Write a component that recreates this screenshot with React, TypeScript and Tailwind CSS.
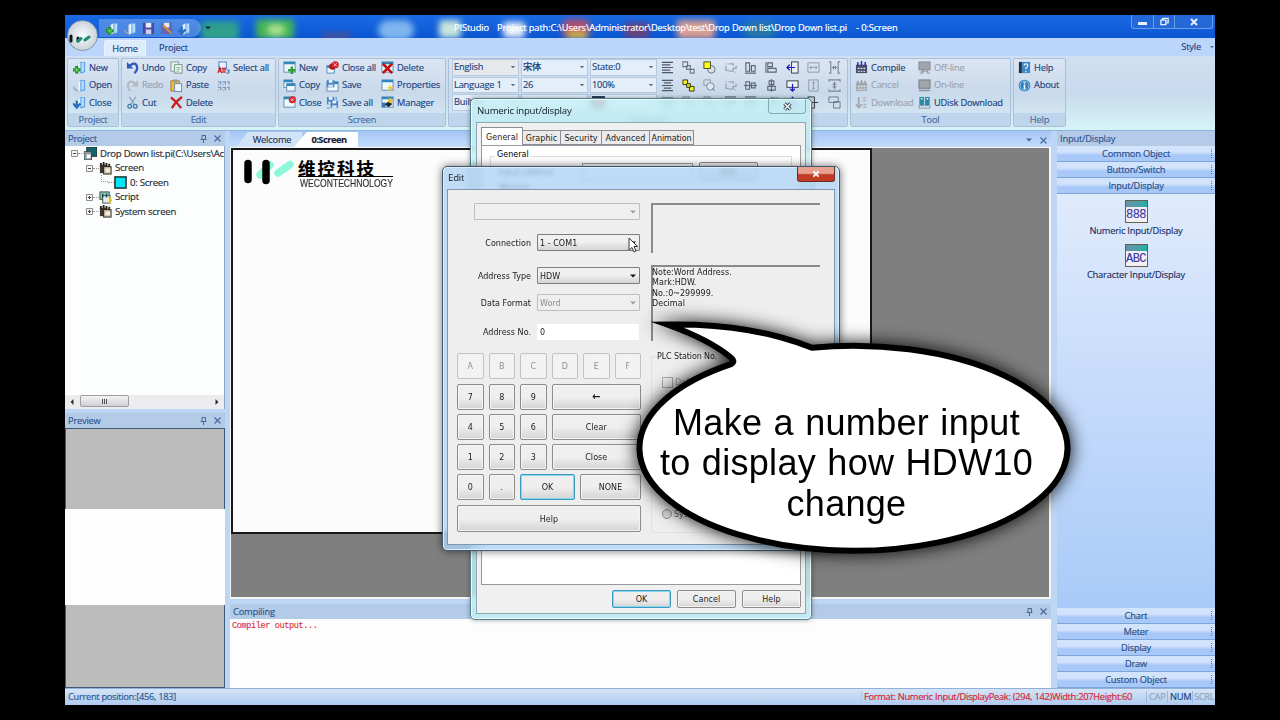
import type { ReactNode } from "react";
import clsx from "clsx";

const Svg = ({ children, size = 13 }: { children: ReactNode; size?: number }) => (
  <svg width={size} height={size} viewBox="0 0 14 14" fill="none" className="shrink-0">
    {children}
  </svg>
);

const Folder = () => (
  <>
    <path d="M5 3 L9 1 V12 L5 13.5 Z" fill="#e8f4fc" stroke="#9fb8d0" strokeWidth=".5" />
    <path d="M8 1 H13 V12 L8 13.5 Z" fill="#4f9be0" />
    <path d="M9 2 L12 1.5 V11 L9 12 Z" fill="#b4dcfa" />
  </>
);

const Win = ({ x = 1, y = 1, w = 12, h = 11 }: { x?: number; y?: number; w?: number; h?: number }) => (
  <>
    <rect x={x} y={y} width={w} height={h} fill="#eef7fc" stroke="#5a8cb4" />
    <rect x={x} y={y} width={w} height={2.5} fill="#2f86b8" />
  </>
);

const RedDot = () => (
  <>
    <circle cx="10" cy="4" r="3.8" fill="#d8242c" />
    <path d="M8.5 2.5 l3 3 m0 -3 l-3 3" stroke="#fbd0d0" />
  </>
);

const Disk = ({ x = 5, y = 1 }: { x?: number; y?: number }) => (
  <>
    <rect x={x} y={y} width="8" height="8" fill="#4a86c8" />
    <rect x={x + 2} y={y} width="4" height="3" fill="#e8f2fa" />
    <rect x={x + 1.5} y={y + 5} width="5" height="3" fill="#cfe2f4" />
  </>
);

const icons: Record<string, ReactNode> = {
  newProject: (
    <>
      <Folder />
      <path d="M4 5.5 V13.5 M0 9.5 H8" stroke="#1f8a2c" strokeWidth="3.4" />
      <path d="M4 7 V12 M1.5 9.5 H6.5" stroke="#6fd060" strokeWidth="1.2" />
    </>
  ),
  open: (
    <>
      <Folder />
      <path d="M1 8 q0 4 4 4" stroke="#9aa4b0" strokeWidth="1.5" />
    </>
  ),
  close: (
    <>
      <Folder />
      <path d="M0 8 L4 12.5 L8 8 M4 5 V11" stroke="#2a6cc0" strokeWidth="2.4" />
    </>
  ),
  undo: (
    <>
      <path d="M4 5 Q10 0 12 6 Q12.5 10 9 13" stroke="#3058b8" strokeWidth="2.4" />
      <path d="M1 1 V8 H8 Z" fill="#3058b8" />
    </>
  ),
  redo: (
    <>
      <path d="M10 5 Q4 0 2 6 Q1.5 10 5 13" stroke="#b4bac2" strokeWidth="2.2" />
      <path d="M13 1 V8 H6 Z" fill="#b4bac2" />
    </>
  ),
  cut: (
    <>
      <path d="M3.5 1 L9 9 M10.5 1 L5 9" stroke="#8ca4b8" strokeWidth="1.4" />
      <circle cx="4" cy="11" r="2" stroke="#3c78b0" strokeWidth="1.4" />
      <circle cx="10" cy="11" r="2" stroke="#3c78b0" strokeWidth="1.4" />
    </>
  ),
  copy: (
    <>
      <rect x="1" y="1" width="8" height="10" fill="#e6f2ea" stroke="#7c9c98" />
      <rect x="5" y="4" width="8" height="9" fill="#f4faf4" stroke="#6c9080" />
      <path d="M7 7 h4 M7 9 h4 M7 11 h3" stroke="#78b088" />
    </>
  ),
  paste: (
    <>
      <rect x="1" y="2" width="9" height="11" fill="#f0bc38" stroke="#a87c20" />
      <rect x="3.5" y=".5" width="4" height="3" fill="#8898a8" />
      <rect x="5" y="5" width="7.5" height="8.5" fill="#eef4fc" stroke="#6888b0" />
    </>
  ),
  cross: (
    <path d="M1 1.5 Q7 6 12 13 M13 1 Q6 6 2 13" stroke="#c81e1e" strokeWidth="2.5" />
  ),
  selectAll: (
    <>
      <rect x="2" y="1" width="8" height="7" fill="#f0f4fc" stroke="#4878b8" />
      <path d="M1 13 L3 7 L5 13 M2 11 h2 M6.5 7 V13 M8.5 7 V13" stroke="#d02020" strokeWidth="1.3" />
      <path d="M10 8 L13 12 M13 9 v4 h-3" stroke="#3868b0" />
    </>
  ),
  grid: (
    <path
      d="M1 3 h3 v3 M6 3 h3 v3 M11 3 h2 v3 M1 9 h3 v3 M6 9 h3 v3 M11 9 h2 v3 M1 6 h1 M6 6 h1 M1 12 h1 M6 12 h1"
      stroke="#7e98b8"
      strokeWidth="1.4"
    />
  ),
  newScreen: (
    <>
      <Win />
      <path d="M9.5 6 V14 M5.5 10 H13.5" stroke="#2c9c34" strokeWidth="2.6" />
    </>
  ),
  copyScreen: (
    <>
      <Win x={1} y={1} w={9} h={8} />
      <Win x={4} y={5} w={9} h={8} />
    </>
  ),
  closeScreen: (
    <>
      <Win />
      <RedDot />
    </>
  ),
  closeAll: (
    <>
      <Win x={1} y={5} w={8} h={8} />
      <circle cx="7" cy="6" r="3.5" fill="#b01820" />
      <RedDot />
    </>
  ),
  save: (
    <>
      <Win x={1} y={3} w={12} h={10} />
      <Disk x={1} y={1} />
    </>
  ),
  saveAll: (
    <>
      <Disk x={1} y={1} />
      <Disk x={5} y={5} />
      <path d="M1 13 h3 M11 1 v3" stroke="#4a86c8" />
    </>
  ),
  deleteScreen: (
    <>
      <Win />
      <path d="M2 3 L12 13 M12 3 L2 13" stroke="#c01414" strokeWidth="2.8" />
    </>
  ),
  properties: (
    <>
      <Win />
      <path d="M10 6 l1 2.5 h2.5 l-2 2 l1 3 l-2.5 -2 l-2.5 2 l1 -3 l-2 -2 h2.5 z" fill="#f0c838" />
    </>
  ),
  manager: (
    <>
      <Win />
      <rect x="1" y="7" width="4" height="5" fill="#3878c0" />
      <path d="M4 9 L9 5 L12 9 L8 12 Z" fill="#202830" />
      <circle cx="10" cy="5" r="2.5" fill="#e8c030" />
    </>
  ),
  compile: (
    <>
      <rect x="1" y="4" width="12" height="9" fill="#4a4f68" />
      <path d="M3 1 v5 M7 0 v6 M11 1 v5" stroke="#2b32c0" strokeWidth="1.6" />
      <path d="M3 8 h2 M6 8 h2 M9 8 h2 M3 11 h2 M6 11 h2 M9 11 h2" stroke="#dfe6f8" strokeWidth="1.2" />
    </>
  ),
  cancel: (
    <>
      <rect x="1" y="4" width="12" height="9" fill="#a8adb4" />
      <path d="M3 2 v4 M7 1 v5 M11 2 v4" stroke="#989da4" strokeWidth="1.6" />
      <path d="M3 8 h2 M6 8 h2 M9 8 h2 M3 11 h2 M6 11 h2 M9 11 h2" stroke="#e4e8ec" strokeWidth="1.2" />
    </>
  ),
  download: (
    <>
      <path d="M4 1 V12 M1 9 L4 12.5 L7 9" stroke="#a4a9b0" strokeWidth="2" />
      <path d="M8 2 h5 M8 5 h5 M8 9 h5 M8 12 h5 M10 1 v5 M10 8 v5" stroke="#b0b5bc" />
    </>
  ),
  offline: (
    <>
      <rect x="1" y="1" width="12" height="8.5" fill="#a2a6ac" stroke="#85898f" />
      <path d="M3 11 h8 M5 9 v4 M2 13 h4 M10 10 v3 h3" stroke="#8b8f95" />
    </>
  ),
  online: (
    <>
      <rect x="1" y="1" width="12" height="9" fill="#a2a6ac" stroke="#777b81" />
      <path d="M1 12.5 H13" stroke="#8b8f95" strokeWidth="1.6" />
    </>
  ),
  udisk: (
    <>
      <rect x="1.5" y="1" width="5" height="9" fill="#2c88a8" />
      <rect x="7.5" y="1" width="5" height="9" fill="#2c88a8" />
      <path d="M3 3 h2 M9 3 h2" stroke="#d8f0f4" strokeWidth="1.5" />
      <path d="M1 10.5 H13 V13 H1 Z" fill="#e6edf4" stroke="#57718c" strokeWidth=".7" />
    </>
  ),
  help: (
    <>
      <rect x="1" y="1" width="12" height="12" fill="#3e86c8" />
      <rect x="1" y="1" width="3" height="12" fill="#26323e" />
      <path d="M6.5 5 q0 -2 2 -2 q2.2 0 2 2 q0 1.5 -2 2.5 v1.5 M8.5 10.5 v1.5" stroke="#e4f2fc" strokeWidth="1.3" />
    </>
  ),
  about: (
    <>
      <circle cx="7" cy="7" r="6.3" fill="#2f7fc0" />
      <circle cx="7" cy="7" r="4.8" stroke="#9fd0f0" />
      <path d="M7 6 V11 M7 3.3 v1.5" stroke="#fff" strokeWidth="1.8" />
    </>
  ),
  quickSave: (
    <>
      <rect x="1" y="1" width="12" height="12" fill="#4a4aa0" />
      <rect x="4" y="1" width="6" height="5" fill="#e8ecfa" />
      <rect x="4" y="8" width="6" height="5" fill="#c8d0ee" />
    </>
  ),
  quickSaveAs: (
    <>
      <rect x="1" y="1" width="12" height="12" fill="#6666b0" />
      <rect x="4" y="1" width="6" height="5" fill="#e8ecfa" />
      <path d="M4 4 L12 12" stroke="#d89030" strokeWidth="2.2" />
    </>
  ),
};

const alignIcons: ReactNode[] = [
  <path d="M1 1.5 H13 M1 4.200 H10 M1 7 H13 M1 9.800 H10 M1 12.500 H13" stroke="#4c5868" strokeWidth="1.2" />,
  <path d="M1 1 h5 v5 h-5 z M5 5 h4 v4 h-4 z M9 9 h4 v4 h-4 z" fill="#dfe6ee" stroke="#6a7684" strokeWidth="1.2" />,
  <>
    <circle cx="9" cy="9" r="4" stroke="#687078" fill="#dce0e4" />
    <rect x="1" y="1" width="7" height="7" fill="#ffff20" stroke="#404818" />
  </>,
  <path d="M5 3 h5 v2 M2 5 v5 h3 M9 8 h4 v-3 M5 11 h5 v-3 M2 3 h1 M12 12 h1" stroke="#9ca6b2" strokeWidth="1.4" />,
  <path d="M1 13 H13 M2 2 h4 v9 h-4 z M8 5 h4 v6 h-4 z" stroke="#5a6676" strokeWidth="1.2" />,
  <path d="M1 1 V13 M3 2 h5 v4 h-5 z M3 8 h9 v4 h-9 z" stroke="#5a6676" strokeWidth="1.2" />,
  <>
    <rect x="6" y="1" width="7" height="12" stroke="#303840" fill="#eef2f8" />
    <path d="M10 7 H1 M4 4 L1 7 L4 10" stroke="#1818c8" strokeWidth="1.3" />
  </>,
  <path d="M1 2 H13 V12 H1 Z M3 7 H11 M5 5 L3 7 L5 9 M9 5 L11 7 L9 9" stroke="#8c96a4" />,
  <path d="M1 1 h2 v12 h-2 M13 1 h-2 v12 h2 M4 7 H10 M6 5 v4 M8 5 v4" stroke="#7a8694" strokeWidth="1.2" />,
  <path d="M1 1.5 H13 M3 4.200 H11 M1 7 H13 M3 9.800 H11 M1 12.500 H13" stroke="#4c5868" strokeWidth="1.2" />,
  <>
    <path d="M1 1 h5 v5 h-5 z M8 8 h5 v5 h-5 z" fill="#f8f020" stroke="#303408" />
    <path d="M5 5 h4 v4 h-4 z" fill="#e0d818" stroke="#303408" />
  </>,
  <>
    <rect x="1" y="1" width="7" height="6" stroke="#909aa6" />
    <circle cx="8" cy="8" r="4" stroke="#7a8694" fill="#dfe6ee" />
    <path d="M10 10 L13 13" stroke="#7a8694" />
  </>,
  <path d="M5 3 h5 v2 M2 5 v5 h3 M9 8 h4 v-3 M5 11 h5 v-3 M2 3 h1 M12 12 h1" stroke="#9ca6b2" strokeWidth="1.4" />,
  <path d="M0 7 H14 M2 3 h4 v8 h-4 z M8 4.5 h4 v5 h-4 z" stroke="#5a6676" strokeWidth="1.2" />,
  <path d="M7 0 V14 M4.5 2 h5 v4 h-5 z M3 8 h8 v4 h-8 z" stroke="#5a6676" strokeWidth="1.2" />,
  <>
    <rect x="1" y="2" width="12" height="7" stroke="#303840" fill="#eef2f8" />
    <path d="M7 5 V13 M4.5 10.5 L7 13 L9.5 10.5" stroke="#1818c8" strokeWidth="1.3" />
  </>,
  <path d="M2 1 H12 V13 H2 Z M7 3 V11 M5.5 4.5 L7 3 L8.5 4.5 M5.5 9.5 L7 11 L8.5 9.5" stroke="#8c96a4" />,
  <path d="M1 3 v-2 h12 v2 M1 11 v2 h12 v-2 M7 3 v8 M5 5.5 h4 M5 8.5 h4" stroke="#7a8694" strokeWidth="1.2" />,
  <path d="M1 2 H13 M4 4.5 H13 M1 7 H13 M4 9.5 H13 M1 12 H13" stroke="#5c6878" />,
  <path d="M1 1 h7 v7 h-7 z M6 6 h7 v7 h-7 z" stroke="#7c8694" />,
  <path d="M1 1 h7 v7 h-7 z M6 6 h7 v7 h-7 z" stroke="#7c8694" />,
  <path d="M1 1 H13 M2 3 h4 v9 h-4 z M8 3 h4 v6 h-4 z" stroke="#4c5868" />,
  <path d="M1 1 H13 M2 3 h4 v9 h-4 z M8 3 h4 v6 h-4 z" stroke="#4c5868" />,
  <path d="M13 1 V13 M6 2 h5 v4 h-5 z M2 8 h9 v4 h-9 z" stroke="#6c7888" />,
  <path d="M7 1 V9 M4 4 L7 1 L10 4 M1 7 h12 v6 h-12 z" stroke="#1818c8" />,
  <path d="M1 1 H8 V13 H1 Z M12 7 H5" stroke="#303840" />,
  <path d="M1 1 h10 v6 h-10 z M6 6 h7 v7 h-7 z" stroke="#6c7888" />,
];

const Caret = ({ className }: { className?: string }) => (
  <svg width="6" height="4" viewBox="0 0 6 4" className={clsx("shrink-0", className)}>
    <path d="M0 .5 H6 L3 3.5 Z" fill="currentColor" />
  </svg>
);

const PinClose = () => (
  <div className="flex items-center gap-[7px] text-[#44699c]">
    <svg width="7" height="8" viewBox="0 0 7 8" fill="none" stroke="currentColor">
      <path d="M2 .5 H5.5 V4.5 H2 Z M.5 4.5 H6.5 M3.5 5 V8" />
    </svg>
    <svg width="7" height="7" viewBox="0 0 7 7" stroke="currentColor" strokeWidth="1.1">
      <path d="M.5 .5 L6.5 6.5 M6.5 .5 L.5 6.5" />
    </svg>
  </div>
);

const PanelHeader = ({ title, buttons = true }: { title: string; buttons?: boolean }) => (
  <div className="flex h-[15px] shrink-0 items-center justify-between bg-[#b3cbe6] pl-[3px] pr-1 text-[#2b5591]">
    <span>{title}</span>
    {buttons && <PinClose />}
  </div>
);

type Item = { icon: string; label?: string; disabled?: boolean };

const RibbonColumn = ({ items, className }: { items: Item[]; className: string }) => (
  <div className={clsx("flex shrink-0 flex-col", className)}>
    {items.map((item, i) => (
      <div
        key={i}
        className={clsx(
          "flex h-[17.5px] items-center gap-[3px] whitespace-nowrap",
          item.disabled ? "text-[#98a2b0]" : "text-[#203f7c]"
        )}
      >
        <Svg>{icons[item.icon]}</Svg>
        {item.label}
      </div>
    ))}
  </div>
);

const RibbonGroup = ({ title, className, children }: { title: string; className: string; children: ReactNode }) => (
  <div
    className={clsx(
      "flex h-[69px] shrink-0 flex-col overflow-hidden rounded-[2px] border border-[#a9c0da] bg-linear-to-b from-[#dbe6f4] via-[#c9d9eb] to-[#d8eaf5]",
      className
    )}
  >
    <div className="flex h-[54px] pl-[4px]">{children}</div>
    <div className="flex grow items-center justify-center bg-[#bfd5ec] text-[#466a9f]">{title}</div>
  </div>
);

const combos = [
  ["English", "Language 1", "Built-in"],
  ["宋体", "26", ""],
  ["State:0", "100%", ""],
];

const Ribbon = () => (
  <div className="flex h-[75px] shrink-0 items-start border-b border-[#8fb4dc] bg-linear-to-b from-[#d0e0f2] via-[#c8daed] to-[#d6f4f6] pl-[2px] pt-[2px]">
    <RibbonGroup title="Project" className="w-[52px]">
      <RibbonColumn
        className="ml-px w-[44px]"
        items={[
          { icon: "newProject", label: "New" },
          { icon: "open", label: "Open" },
          { icon: "close", label: "Close" },
        ]}
      />
    </RibbonGroup>
    <RibbonGroup title="Edit" className="ml-[2px] w-[155px]">
      <RibbonColumn
        className="w-[44px]"
        items={[
          { icon: "undo", label: "Undo" },
          { icon: "redo", label: "Redo", disabled: true },
          { icon: "cut", label: "Cut" },
        ]}
      />
      <RibbonColumn
        className="w-[47px]"
        items={[
          { icon: "copy", label: "Copy" },
          { icon: "paste", label: "Paste" },
          { icon: "cross", label: "Delete" },
        ]}
      />
      <RibbonColumn className="w-[55px]" items={[{ icon: "selectAll", label: "Select all" }, { icon: "grid" }]} />
    </RibbonGroup>
    <RibbonGroup title="Screen" className="ml-[2px] w-[168px]">
      <RibbonColumn
        className="w-[43px]"
        items={[
          { icon: "newScreen", label: "New" },
          { icon: "copyScreen", label: "Copy" },
          { icon: "closeScreen", label: "Close" },
        ]}
      />
      <RibbonColumn
        className="w-[55px]"
        items={[
          { icon: "closeAll", label: "Close all" },
          { icon: "save", label: "Save" },
          { icon: "saveAll", label: "Save all" },
        ]}
      />
      <RibbonColumn
        className="w-[60px]"
        items={[
          { icon: "deleteScreen", label: "Delete" },
          { icon: "properties", label: "Properties" },
          { icon: "manager", label: "Manager" },
        ]}
      />
    </RibbonGroup>
    <RibbonGroup title="Attributes" className="ml-[2px] w-[400px]">
      <div className="-ml-px flex gap-[2px]">
        {combos.map((column, i) => (
          <div key={i} className="flex w-[67px] flex-col gap-px">
            {column.map((value, j) => (
              <div
                key={j}
                className={clsx(
                  "flex h-[16.5px] items-center justify-between border border-[#b4cae2] pl-px pr-[2px] text-[#203f7c]",
                  i === 0 && j === 0 ? "bg-[#e6e8ec]" : "bg-[#e4eef9]"
                )}
              >
                {i === 2 && j === 2 ? (
                  <span className="h-[12px] w-[13px] border-2 border-[#304060] bg-[#ff5068]" />
                ) : (
                  value
                )}
                <Caret className="scale-75 text-[#5c6c84]" />
              </div>
            ))}
          </div>
        ))}
      </div>
      <div className="grid w-[188px] shrink-0 grid-cols-9 grid-rows-[17.5px_17.5px_17.5px] items-center justify-items-center">
        {alignIcons.map((icon, i) => (
          <Svg key={i}>{icon}</Svg>
        ))}
      </div>
    </RibbonGroup>
    <RibbonGroup title="Tool" className="ml-[2px] w-[161px]">
      <RibbonColumn
        className="w-[63px]"
        items={[
          { icon: "compile", label: "Compile" },
          { icon: "cancel", label: "Cancel", disabled: true },
          { icon: "download", label: "Download", disabled: true },
        ]}
      />
      <RibbonColumn
        className="w-[90px]"
        items={[
          { icon: "offline", label: "Off-line", disabled: true },
          { icon: "online", label: "On-line", disabled: true },
          { icon: "udisk", label: "UDisk Download" },
        ]}
      />
    </RibbonGroup>
    <RibbonGroup title="Help" className="ml-[2px] w-[53px]">
      <RibbonColumn
        className="w-[48px]"
        items={[
          { icon: "help", label: "Help" },
          { icon: "about", label: "About" },
        ]}
      />
    </RibbonGroup>
  </div>
);

const TitleBar = () => (
  <div className="relative flex h-[23px] shrink-0 items-center overflow-hidden bg-linear-to-b from-[#1a6ae4] to-[#0b56d2] text-white">
    {/* desktop showing through the glass */}
    <div className="absolute inset-0 blur-[3px]">
      <span className="absolute left-[136px] top-[6px] h-[20px] w-[38px] rounded bg-[#2fa08c]" />
      <span className="absolute left-[191px] top-[4px] h-[20px] w-[38px] rounded bg-[#44b454]" />
      <span className="absolute left-[202px] top-[9px] h-[12px] w-[18px] rounded-full bg-[#a8e08c]" />
      <span className="absolute left-[257px] top-[18px] h-[6px] w-[28px] bg-[#50508c]" />
      <span className="absolute left-[313px] top-[5px] h-[20px] w-[36px] rounded-full bg-[#7fb6ee]" />
      <span className="absolute left-[374px] top-[5px] h-[18px] w-[22px] rounded bg-[#c8e6dc]" />
      <span className="absolute left-[438px] top-[7px] h-[16px] w-[22px] rounded bg-[#e6eef8]" />
      <span className="absolute left-[496px] top-[4px] h-[19px] w-[30px] rounded-full bg-[#b0506c]" />
      <span className="absolute left-[502px] top-[16px] h-[8px] w-[20px] bg-[#d8b840]" />
      <span className="absolute left-[560px] top-[8px] h-[15px] w-[24px] bg-[#6c4078]" />
      <span className="absolute left-[612px] top-[5px] h-[19px] w-[38px] rounded bg-[#dca090]" />
      <span className="absolute left-[678px] top-[6px] h-[17px] w-[34px] rounded-full bg-[#2878a8]" />
    </div>
    <div className="relative ml-[34px] mt-[3px] flex h-[18px] w-[102px] items-center gap-[5px] rounded-r-full bg-[#b8d4f4]/35 pl-[7px]">
      {["newProject", "open", "quickSave", "quickSaveAs", "close"].map((name) => (
        <Svg key={name}>{icons[name]}</Svg>
      ))}
    </div>
    <Caret className="relative ml-[4px] mt-[2px] text-[#102848]" />
    <div className="relative ml-[243px] mt-[3px] flex grow whitespace-pre tracking-[-0.12px] [-webkit-text-stroke:0.2px]">
      <span className="w-[43px]">PIStudio</span>
      <span className="w-[359px]">Project path:C:\Users\Administrator\Desktop\test\Drop Down list\Drop Down list.pi</span>
      <span>- 0:Screen</span>
    </div>
    <div className="relative mr-[2px] flex h-[14px] self-start overflow-hidden rounded-b-[3px] border border-t-0 border-[#6a9cea] bg-[#2468d8]">
      <span className="flex w-[22px] items-center justify-center border-r border-[#6a9cea]">
        <span className="mt-[3px] h-[3px] w-[9px] bg-[#e8eefa]" />
      </span>
      <span className="flex w-[21px] items-center justify-center border-r border-[#6a9cea]">
        <svg width="9" height="9" viewBox="0 0 10 9" fill="none" stroke="#e8eefa" strokeWidth="1.5">
          <path d="M3 2.5 V1 H9 V6 H7.5 M1 3 H6.5 V8 H1 Z" />
        </svg>
      </span>
      <span className="flex w-[37px] items-center justify-center">
        <svg width="8" height="8" viewBox="0 0 8 8" stroke="#e8eefa" strokeWidth="2">
          <path d="M1 1 L7 7 M7 1 L1 7" />
        </svg>
      </span>
    </div>
  </div>
);

const Expander = ({ open }: { open?: boolean }) => (
  <svg width="7" height="7" viewBox="0 0 7 7" fill="#f4f4f4" stroke="#8c8c8c" className="shrink-0">
    <path d="M.5 .5 H6.5 V6.5 H.5 Z" />
    <path d={open ? "M2 3.5 H5" : "M2 3.5 H5 M3.5 2 V5"} stroke="#404860" />
  </svg>
);

const StackIcon = () => (
  <Svg>
    <path d="M1 3 h8 v9 h-8 z" fill="#403830" />
    <path d="M2 1 v4 M5 0 v4 M8 1 v3 M11 2 v3" stroke="#282018" strokeWidth="2" />
    <rect x="5" y="5" width="8" height="8" fill="#c8c0a8" stroke="#282018" />
    <rect x="7" y="7" width="5" height="4" fill="#f0ecdc" />
  </Svg>
);

const tree = [
  {
    indent: "pl-[6px]",
    open: true,
    label: "Drop Down list.pi(C:\\Users\\Ac",
    icon: (
      <Svg>
        <rect x="3" y="0" width="11" height="10" fill="#10686c" stroke="#202820" />
        <rect x="0" y="5" width="8" height="9" fill="#98a0a4" stroke="#3c4448" />
        <rect x="3" y="8" width="4" height="4" fill="#fff" />
      </Svg>
    ),
  },
  { indent: "pl-[21px]", open: true, label: "Screen", icon: <StackIcon /> },
  {
    indent: "pl-[36px]",
    leaf: true,
    label: "0: Screen",
    icon: (
      <Svg>
        <rect x="1" y="1" width="12" height="12" fill="#00e8f8" stroke="#182020" strokeWidth="1.5" />
      </Svg>
    ),
  },
  {
    indent: "pl-[21px]",
    label: "Script",
    icon: (
      <Svg>
        <rect x="1" y="1" width="10" height="8" fill="#8cc8c0" stroke="#304848" />
        <rect x="4" y="5" width="8" height="8" fill="#e4eee8" stroke="#405050" />
        <path d="M4 3 v4 M8 3 v4" stroke="#184848" strokeWidth="1.5" />
        <path d="M11 7 L13 10 L11 13" stroke="#e0c010" strokeWidth="2" />
      </Svg>
    ),
  },
  { indent: "pl-[21px]", label: "System screen", icon: <StackIcon /> },
];

const LeftColumn = () => (
  <div className="flex w-[160px] shrink-0 flex-col">
    <PanelHeader title="Project" />
    <div className="flex h-[263px] shrink-0 flex-col border-r border-[#8aa6c4] bg-[#fcfdfd]">
      <div className="flex grow flex-col overflow-hidden pt-[0.5px]">
        {tree.map((node) => (
          <div
            key={node.label}
            className={clsx("flex h-[14.5px] items-center whitespace-nowrap text-[9.6px] text-[#262a30]", node.indent)}
          >
            {node.leaf ? (
              <span className="h-[7px] w-[7px] -translate-y-1 border-b border-l border-dotted border-[#9a9a9a]" />
            ) : (
              <Expander open={node.open} />
            )}
            <span className="h-px w-[6px] shrink-0 border-t border-dotted border-[#9a9a9a]" />
            {node.icon}
            <span className="ml-[3px] tracking-[-0.27px]">{node.label}</span>
          </div>
        ))}
      </div>
      <div className="flex h-[14px] shrink-0 items-start justify-between bg-[#ececee] px-[4px]">
        <Caret className="mt-[5px] rotate-90 text-[#303030]" />
        <div className="ml-[5px] mr-auto flex h-[12px] w-[49px] items-center justify-center gap-px rounded-[2px] border border-[#9a9ea4] bg-linear-to-b from-[#f4f4f4] to-[#cfd0d3]">
          <span className="h-[5px] w-px bg-[#505050]" />
          <span className="h-[5px] w-px bg-[#505050]" />
          <span className="h-[5px] w-px bg-[#505050]" />
        </div>
        <Caret className="mt-[5px] -rotate-90 text-[#303030]" />
      </div>
    </div>
    <div className="mt-[4px]">
      <PanelHeader title="Preview" />
    </div>
    <div className="flex grow flex-col border border-[#3f5a78] bg-[#bcbcbc]">
      <div className="-mx-px mt-[80px] h-[96px] bg-[#fdfdfd]" />
    </div>
  </div>
);

const CenterColumn = () => (
  <div className="flex w-[832px] shrink-0 flex-col px-[5px] pr-[6px]">
    <div className="flex h-[16px] shrink-0 items-end justify-between bg-linear-to-b from-[#a5c5f4] to-[#c4dcfa] pr-[4px]">
      <div className="flex items-end pl-[6px]">
        <div className="flex h-[15px] w-[66px] items-center justify-center bg-[#d2e3f8] pl-[6px] text-[#1f2f50] [clip-path:polygon(18%_0,100%_0,100%_100%,0_100%)]">
          Welcome
        </div>
        <div className="-ml-[8px] flex h-[15px] w-[64px] items-center justify-center bg-white pl-[8px] pr-[2px] font-bold tracking-[-0.5px] text-[#10203c] [clip-path:polygon(20%_0,100%_0,100%_100%,0_100%)]">
          0:Screen
        </div>
      </div>
      <div className="flex h-[14px] items-center gap-[8px] text-[#44699c]">
        <Caret />
        <svg width="7" height="7" viewBox="0 0 7 7" stroke="currentColor" strokeWidth="1.1">
          <path d="M.5 .5 L6.5 6.5 M6.5 .5 L.5 6.5" />
        </svg>
      </div>
    </div>
    <div className="h-[452px] shrink-0 border-2 border-l border-t border-[#f4f6f6] bg-[#7f7f7f]">
      <div className="h-[386px] w-[641px] border-2 border-[#181818] bg-[#fcfcfc] pl-[11px] pt-[9px]">
        <div className="flex">
          <svg width="53" height="30" viewBox="0 0 53 30" fill="none" strokeLinecap="round" strokeWidth="7.5">
            <path d="M26 6 L16 16 M46 5.5 L34 14" stroke="#8cf8da" />
            <path d="M4 4.5 V20.5 M22 4.500 V21.5" stroke="#000" />
          </svg>
          <div className="flex w-[110px] flex-col">
            <span className="ml-px h-[18px] w-[95px] whitespace-nowrap border-b border-black font-['Noto_Sans_CJK_SC',sans-serif] text-[17.5px]/[17px] font-bold tracking-[2px] text-black">
              维控科技
            </span>
            <span className="ml-[3px] mt-px origin-left scale-x-[0.78] font-['Liberation_Sans',sans-serif] text-[11px]/[11px] tracking-normal text-[#303030]">
              WECONTECHNOLOGY
            </span>
          </div>
        </div>
      </div>
    </div>
    <div className="mt-[5px]">
      <PanelHeader title="Compiling" />
    </div>
    <div className="grow bg-[#fdfdfe] pl-[2px] pt-[1px] font-['Liberation_Mono',monospace] text-[8.5px] tracking-[-0.35px] text-[#d8343c]">
      Compiler output...
    </div>
  </div>
);

const Section = ({ title }: { title: string }) => (
  <div className="flex h-4 shrink-0 items-center border-b border-[#7da4d8] bg-linear-to-b from-[#d2e4fc] from-40% to-[#a8c8f8] to-60% text-[#264c88]">
    <span className="grow pl-[4px] pt-px text-center">{title}</span>
    <span className="h-[9px] border-l border-dotted border-[#5078b0] pr-[3px]" />
  </div>
);

const Tool = ({ glyph, title }: { glyph: string; title: string }) => (
  <div className="flex h-[44px] flex-col items-center text-[#1a2c60]">
    <div className="flex h-[23px] w-[23px] flex-col border border-[#686048] bg-[#f2f0f4]">
      <span className="h-[6px] shrink-0 bg-linear-to-r from-[#6890a8] to-[#10b0a8]" />
      <span className="text-center font-['Liberation_Mono',monospace] text-[12px]/[16px] tracking-[-0.6px] text-[#3c38a8]">
        {glyph}
      </span>
    </div>
    <span className="mt-[2px]">{title}</span>
  </div>
);

const RightColumn = () => (
  <div className="flex w-[158px] shrink-0 flex-col">
    <PanelHeader title="Input/Display" buttons={false} />
    <Section title="Common Object" />
    <Section title="Button/Switch" />
    <Section title="Input/Display" />
    <div className="grow bg-linear-to-b from-[#e0ebfc] to-[#a9caf8] pt-[6px]">
      <Tool glyph="888" title="Numeric Input/Display" />
      <Tool glyph="ABC" title="Character Input/Display" />
    </div>
    {["Chart", "Meter", "Display", "Draw", "Custom Object"].map((title) => (
      <Section key={title} title={title} />
    ))}
  </div>
);

const StatusBar = () => (
  <div className="flex h-[17px] shrink-0 items-center whitespace-nowrap border-t border-[#8fb0d8] bg-linear-to-b from-[#d6e4f6] to-[#aecbf0] pl-[3px] tracking-[-0.3px] text-[#2b5591]">
    <span className="grow">Current position:[456, 183]</span>
    <span className="w-[285px] shrink-0 border-l border-[#b4cae4] pl-[2px] text-[#d81c30]">
      Format: Numeric Input/DisplayPeak: (294, 142)Width:207Height:60
    </span>
    <span className="w-[21px] shrink-0 border-l border-[#9cb8dc] pl-[2px] text-[#8fa4c0]">CAP</span>
    <span className="w-[25px] shrink-0 border-l border-[#9cb8dc] pl-[2px] text-[#203f7c]">NUM</span>
    <span className="w-[23px] shrink-0 border-l border-[#9cb8dc] pl-px text-[#8fa4c0]">SCRL</span>
  </div>
);

type ButtonProps = { children: ReactNode; className?: string; primary?: boolean; disabled?: boolean };

const Button = ({ children, className, primary, disabled }: ButtonProps) => (
  <button
    className={clsx(
      "flex items-center justify-center rounded-[2px] border",
      disabled
        ? "border-[#c0c2c4] bg-[#f2f2f2] text-[#909090]"
        : "bg-linear-to-b from-[#efefef] from-50% to-[#d4d4d4] text-[#1c1c1c]",
      !disabled && (primary ? "border-[#3a9cc4] shadow-[inset_0_0_0_1px_#8ad4ec]" : "border-[#8c8c8c] shadow-[inset_0_0_0_1px_#f4f4f4]"),
      className
    )}
  >
    {children}
  </button>
);

const NumericDialog = () => (
  <div className="absolute left-[470px] top-[98px] flex h-[522px] w-[342px] flex-col rounded-[5px] border border-[#54808c] bg-[#c4f0f6]/80 px-[5px] pb-[5px] shadow-[0_0_5px_#00000060,inset_0_0_0_1px_#ecfcfc] backdrop-blur-[3px]">
    <div className="flex h-[23px] shrink-0 items-start justify-between pl-px">
      <span className="pt-[6px] font-['Open_Sans',sans-serif] text-[9.6px] tracking-[-0.22px] text-[#101820] [font-stretch:normal]">
        Numeric input/display
      </span>
      <span className="flex h-[15px] w-[38px] items-center justify-center rounded-b-[4px] border border-t-0 border-[#84aab4]">
        <svg width="9" height="9" viewBox="0 0 9 9" fill="none">
          <path d="M1.5 1.5 L7.5 7.5 M7.5 1.5 L1.5 7.5" stroke="#384850" strokeWidth="3.4" />
          <path d="M1.5 1.5 L7.5 7.5 M7.5 1.5 L1.5 7.5" stroke="#fff" strokeWidth="1.4" />
        </svg>
      </span>
    </div>
    <div className="flex grow flex-col border border-[#8ca8b0] bg-[#f0f0f0] px-[4px] pt-[5px]">
      <div className="flex h-[17px] items-end text-[#202020]">
        <span className="flex h-[18px] w-[42px] items-center justify-center border border-b-0 border-[#8a8e94] bg-white">General</span>
        {[
          ["Graphic", "w-[38px]"],
          ["Security", "w-[41px]"],
          ["Advanced", "w-[48px]"],
          ["Animation", "w-[44px] tracking-[-0.1px]"],
        ].map(([tab, width]) => (
          <span key={tab} className={clsx("flex h-[15px] items-center justify-center border border-l-0 border-[#8a8e94] bg-[#ebebeb] pt-px", width)}>
            {tab}
          </span>
        ))}
      </div>
      <div className="h-[440px] border border-[#96999e] bg-white px-[8px] pt-[10px]">
        <div className="h-[60px] border border-[#dcdcdc]">
          <span className="relative -top-[9px] left-[4px] bg-white px-[2px]">General</span>
          <div className="-mt-[7px] flex items-center pl-[8px]">
            <span className="w-[83px]">Input address</span>
            <span className="h-[18px] w-[111px] border border-[#9a9ea4]" />
            <Button className="ml-[6px] h-[19px] w-[59px]">Edit</Button>
          </div>
          <span className="pl-[8px]">Monitor</span>
        </div>
      </div>
      <div className="mt-[5px] flex justify-end gap-[6px]">
        <Button primary className="h-[18px] w-[59px]">OK</Button>
        <Button className="h-[18px] w-[59px]">Cancel</Button>
        <Button className="h-[18px] w-[59px]">Help</Button>
      </div>
    </div>
  </div>
);

const Combo = ({ value, disabled, className }: { value?: string; disabled?: boolean; className?: string }) => (
  <div
    className={clsx(
      "flex h-[17px] items-center justify-between rounded-[1px] border pl-[2px] pr-[3px]",
      disabled
        ? "border-[#bcbec0] bg-[#efefef] text-[#8c8c8c]"
        : "border-[#7c7e82] bg-linear-to-b from-[#f0f0f0] from-45% to-[#d4d4d4] text-[#202020]",
      className
    )}
  >
    <span>{value}</span>
    <Caret className={disabled ? "text-[#a0a0a0]" : "text-[#101010]"} />
  </div>
);

const Field = ({ label, className, children }: { label: string; className: string; children: ReactNode }) => (
  <div className={clsx("-ml-[10px] flex items-center gap-[6px]", className)}>
    <span className="w-[84px] text-right">{label}</span>
    {children}
  </div>
);

const EditDialog = () => (
  <div className="absolute left-[442px] top-[166px] flex h-[385px] w-[398px] flex-col rounded-[5px] border border-[#44586c] bg-[#afd2f2]/80 px-[4px] pb-[5px] shadow-[0_0_8px_#00000090,inset_0_0_0_1px_#dceefc] backdrop-blur-[2px]">
    <div className="flex h-[22px] shrink-0 items-start justify-between">
      <span className="pl-[1px] pt-[5px] font-['Open_Sans',sans-serif] text-[9.6px] tracking-[-0.2px] text-[#101820] [font-stretch:normal]">Edit</span>
      <span className="flex h-[15px] w-[38px] items-center justify-center rounded-b-[3px] border border-t-0 border-[#6c2c24] bg-linear-to-b from-[#e8a090] from-45% to-[#c03c24] to-55%">
        <svg width="8" height="8" viewBox="0 0 9 9" stroke="#fff" strokeWidth="2">
          <path d="M1.5 1.5 L7.5 7.5 M7.5 1.5 L1.5 7.5" />
        </svg>
      </span>
    </div>
    <div className="flex grow border border-[#7c98b4] bg-[#eeeeee] text-[#202020]">
      <div className="flex w-[193px] flex-col pl-[9px]">
        <Combo disabled className="ml-[17px] mt-[13px] w-[166px]" />
        <Field label="Connection" className="mt-[14px]">
          <Combo value="1 - COM1" className="w-[103px]" />
        </Field>
        <Field label="Address Type" className="mt-[16px]">
          <Combo value="HDW" className="w-[103px]" />
        </Field>
        <Field label="Data Format" className="mt-[10px]">
          <Combo disabled value="Word" className="w-[103px]" />
        </Field>
        <Field label="Address No." className="mt-[13px]">
          <span className="flex h-[16px] w-[102px] items-center bg-white pl-[3px]">0</span>
        </Field>
        <div className="mt-[13px] grid w-[184px] grid-cols-6 gap-x-[5px] gap-y-[4px]">
          {["A", "B", "C", "D", "E", "F"].map((key) => (
            <Button key={key} disabled className="mb-[0.5px] h-[26px]">
              {key}
            </Button>
          ))}
          {[
            ["7", "8", "9", "←"],
            ["4", "5", "6", "Clear"],
            ["1", "2", "3", "Close"],
          ].map((row) =>
            row.map((key) => (
              <Button
                key={key}
                className={clsx(
                  "h-[26px]",
                  key === "←" && "font-['DejaVu_Sans',sans-serif] text-[11px] font-bold",
                  (key.length > 1 || key === "←") && "col-span-3"
                )}
              >
                {key}
              </Button>
            ))
          )}
          <Button className="h-[26px]">0</Button>
          <Button className="h-[26px]">.</Button>
          <div className="col-span-4 flex gap-[5px]">
            <Button primary className="w-[55px]">OK</Button>
            <Button className="grow">NONE</Button>
          </div>
          <Button className="col-span-6 mt-[1.5px] h-[27px]">Help</Button>
        </div>
      </div>
      <div className="flex w-[180px] flex-col pl-[10px]">
        <div className="mt-[13px] h-[50px] w-[169px] border-l-2 border-t-2 border-[#8a8a8a]" />
        <div className="mt-[12px] h-[76px] w-[169px] border-l-2 border-t-2 border-[#8a8a8a] leading-[10.4px]">
          <div className="-ml-px">
            <p>Note:Word Address.</p>
            <p>Mark:HDW.</p>
            <p>No.:0~299999.</p>
            <p>Decimal</p>
          </div>
        </div>
        <div className="mt-[15px] h-[177px] w-[169px] border border-[#e2e2e2]">
          <p className="-mt-[7px] ml-[5px] w-[64px] whitespace-nowrap bg-[#eeeeee] tracking-[-0.1px]">PLC Station No.</p>
          <p className="ml-[10px] mt-[14px] flex items-center gap-[2px] text-[#a0a0a0]">
            <span className="h-[11px] w-[11px] border border-[#a8a8a8]" />
            Default
          </p>
          <p className="ml-[10px] mt-[120px] flex items-center gap-[2px] text-[#606060]">
            <span className="h-[10px] w-[10px] rounded-full border border-[#909090] bg-[#dadada]" />
            System
          </p>
        </div>
      </div>
    </div>
  </div>
);

const Balloon = () => (
  <div className="absolute left-[620px] top-[300px] h-[280px] w-[470px]">
    <svg width="470" height="280" viewBox="620 300 470 280" className="overflow-visible drop-shadow-[0_0_9px_rgba(0,0,0,0.95)]">
      <path
        d="M731 364.2 A214 102.5 0 1 0 812 347.7 C768 330 720 323.5 667 324.5 C691 333 716 345 731.5 358 Q735.5 361.5 731 364.2 Z"
        fill="#fff"
        stroke="#000"
        strokeWidth="6"
        strokeMiterlimit="12"
      />
    </svg>
    <p className="absolute left-[20px] top-[103px] w-[413px] text-center font-['Liberation_Sans',sans-serif] text-[36px]/[40.4px] font-normal tracking-[0.3px] text-black [-webkit-text-stroke:0] [word-spacing:1px]">
      Make a number input
      <br />
      to display how HDW10
      <br />
      change
    </p>
  </div>
);

const App = () => (
  <div className="relative flex h-[720px] w-[1280px] flex-col overflow-hidden bg-black px-[65px] pt-[15px] font-['Open_Sans','Noto_Sans_CJK_SC',sans-serif] text-[9.3px]/[12px] font-medium tracking-[-0.2px]">
    <div className="relative flex h-[690px] flex-col bg-[#bdd6f4] [-webkit-text-stroke:0.15px]">
      <TitleBar />
      <div className="flex h-[18px] shrink-0 items-end justify-between bg-[#bcd5fa] pl-[39px] text-[#203f7c]">
        <div className="flex h-[16px] items-center">
          <span className="flex h-full w-[42px] items-center justify-center rounded-t-[2px] border border-b-0 border-[#e6f2fc] bg-[#deebfa]">
            Home
          </span>
          <span className="ml-[13px]">Project</span>
        </div>
        <div className="flex h-full items-center gap-[8px]">
          Style
          <Caret className="scale-75 text-[#5c7ca8]" />
        </div>
      </div>
      <Ribbon />
      <div className="flex h-[557px] shrink-0">
        <LeftColumn />
        <CenterColumn />
        <RightColumn />
      </div>
      <StatusBar />
      <div className="absolute left-[2px] top-[5px] flex h-[31px] w-[31px] items-center justify-center rounded-full border border-[#8098b0] bg-radial from-[#fafcfc] to-[#b8c4d0]">
        <svg width="28" height="14" viewBox="0 0 28 14" fill="none" strokeLinecap="round" strokeWidth="3">
          <path d="M2 7 V12 M9 9 V12" stroke="#101820" />
          <path d="M9 12 L12 9.500 M16 11 L20 8" stroke="#208c74" />
        </svg>
      </div>
    </div>
    <div className="font-['DejaVu_Sans_Condensed','DejaVu_Sans',sans-serif] text-[8.9px] font-normal tracking-[0.05px] [font-stretch:condensed]">
      <NumericDialog />
      <EditDialog />
    </div>
    <svg width="10" height="16" viewBox="0 0 10 16" className="absolute left-[628px] top-[237px]">
      <path d="M1 1 V13 L4 10.5 L6 15 L8 14 L6 9.5 H9.5 Z" fill="#fff" stroke="#383838" />
    </svg>
    <Balloon />
  </div>
);

export default App;
